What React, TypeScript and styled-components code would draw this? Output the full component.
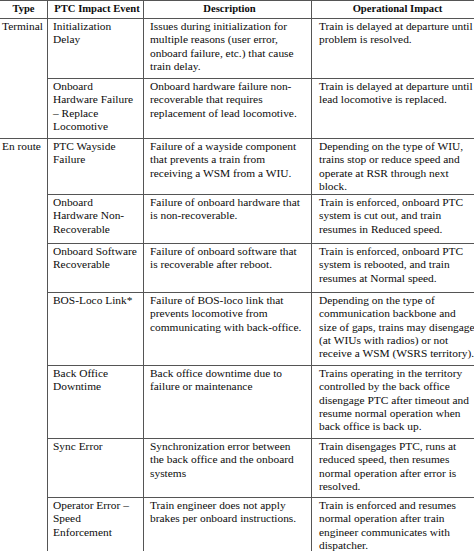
import React from "react";
import styled, { createGlobalStyle } from "styled-components";

const GlobalStyle = createGlobalStyle`
  html, body {
    margin: 0;
    padding: 0;
    background: #ffffff;
    overflow: hidden;
  }
`;

const LINE = "#555555";

// padding-left per column, measured from the reference
const colPad = [2, 5, 6, 7];

const Page = styled.div`
  width: 474px;
  height: 551px;
  overflow: hidden;
  font-family: "Liberation Serif", "Times New Roman", serif;
  font-size: 11.4px;
  line-height: 13.3px;
  color: #0c0c0c;
`;

const Table = styled.table`
  width: 478px;
  table-layout: fixed;
  border-collapse: separate;
  border-spacing: 0;
  border-top: 1px solid ${LINE};
`;

const Row = styled.tr<{ $h: number }>`
  height: ${(p) => p.$h}px;
`;

const HeadCell = styled.th<{ $col: number }>`
  box-sizing: border-box;
  padding: 1px 2px 0 ${(p) => colPad[p.$col]}px;
  font-size: 10.6px;
  font-weight: bold;
  text-align: center;
  vertical-align: top;
  white-space: nowrap;
  border-bottom: 1px solid ${LINE};
  border-right: ${(p) => (p.$col === 3 ? "none" : `1px solid ${LINE}`)};
`;

const Cell = styled.td<{ $col: number }>`
  box-sizing: border-box;
  padding: 1px 0 0 ${(p) => colPad[p.$col]}px;
  text-align: left;
  vertical-align: top;
  white-space: nowrap;
  border-bottom: 1px solid ${LINE};
  border-right: ${(p) => (p.$col === 3 ? "none" : `1px solid ${LINE}`)};
`;

type Entry = {
  event: string[];
  desc: string[];
  impact: string[];
  h: number;
};

const groups: { type: string; rows: Entry[] }[] = [
  {
    type: "Terminal",
    rows: [
      {
        event: ["Initialization", "Delay"],
        desc: [
          "Issues during initialization for",
          "multiple reasons (user error,",
          "onboard failure, etc.) that cause",
          "train delay.",
        ],
        impact: ["Train is delayed at departure until", "problem is resolved."],
        h: 60,
      },
      {
        event: ["Onboard", "Hardware Failure", "– Replace", "Locomotive"],
        desc: [
          "Onboard hardware failure non-",
          "recoverable that requires",
          "replacement of lead locomotive.",
        ],
        impact: [
          "Train is delayed at departure until",
          "lead locomotive is replaced.",
        ],
        h: 60,
      },
    ],
  },
  {
    type: "En route",
    rows: [
      {
        event: ["PTC Wayside", "Failure"],
        desc: [
          "Failure of a wayside component",
          "that prevents a train from",
          "receiving a WSM from a WIU.",
        ],
        impact: [
          "Depending on the type of WIU,",
          "trains stop or reduce speed and",
          "operate at RSR through next",
          "block.",
        ],
        h: 56,
      },
      {
        event: ["Onboard", "Hardware Non-", "Recoverable"],
        desc: ["Failure of onboard hardware that", "is non-recoverable."],
        impact: [
          "Train is enforced, onboard PTC",
          "system is cut out, and train",
          "resumes in Reduced speed.",
        ],
        h: 49,
      },
      {
        event: ["Onboard Software", "Recoverable"],
        desc: ["Failure of onboard software that", "is recoverable after reboot."],
        impact: [
          "Train is enforced, onboard PTC",
          "system is rebooted, and train",
          "resumes at Normal speed.",
        ],
        h: 49,
      },
      {
        event: ["BOS-Loco Link*"],
        desc: [
          "Failure of BOS-loco link that",
          "prevents locomotive from",
          "communicating with back-office.",
        ],
        impact: [
          "Depending on the type of",
          "communication backbone and",
          "size of gaps, trains may disengage",
          "(at WIUs with radios) or not",
          "receive a WSM (WSRS territory).",
        ],
        h: 73,
      },
      {
        event: ["Back Office", "Downtime"],
        desc: ["Back office downtime due to", "failure or maintenance"],
        impact: [
          "Trains operating in the territory",
          "controlled by the back office",
          "disengage PTC after timeout and",
          "resume normal operation when",
          "back office is back up.",
        ],
        h: 73,
      },
      {
        event: ["Sync Error"],
        desc: [
          "Synchronization error between",
          "the back office and the onboard",
          "systems",
        ],
        impact: [
          "Train disengages PTC, runs at",
          "reduced speed, then resumes",
          "normal operation after error is",
          "resolved.",
        ],
        h: 59,
      },
      {
        event: ["Operator Error –", "Speed", "Enforcement"],
        desc: [
          "Train engineer does not apply",
          "brakes per onboard instructions.",
        ],
        impact: [
          "Train is enforced and resumes",
          "normal operation after train",
          "engineer communicates with",
          "dispatcher.",
        ],
        h: 60,
      },
    ],
  },
];

const Lines = ({ lines }: { lines: string[] }) => (
  <>
    {lines.map((l, i) => (
      <React.Fragment key={i}>
        {i > 0 && <br />}
        {l}
      </React.Fragment>
    ))}
  </>
);

export default function App() {
  return (
    <>
      <GlobalStyle />
      <Page>
        <Table>
          <colgroup>
            <col style={{ width: 48 }} />
            <col style={{ width: 96 }} />
            <col style={{ width: 168 }} />
            <col style={{ width: 166 }} />
          </colgroup>
          <thead>
            <Row $h={18}>
              <HeadCell $col={0}>Type</HeadCell>
              <HeadCell $col={1}>PTC Impact Event</HeadCell>
              <HeadCell $col={2}>Description</HeadCell>
              <HeadCell $col={3}>Operational Impact</HeadCell>
            </Row>
          </thead>
          <tbody>
            {groups.map((g) =>
              g.rows.map((r, i) => (
                <Row key={g.type + i} $h={r.h}>
                  {i === 0 && (
                    <Cell $col={0} rowSpan={g.rows.length}>
                      {g.type}
                    </Cell>
                  )}
                  <Cell $col={1}>
                    <Lines lines={r.event} />
                  </Cell>
                  <Cell $col={2}>
                    <Lines lines={r.desc} />
                  </Cell>
                  <Cell $col={3}>
                    <Lines lines={r.impact} />
                  </Cell>
                </Row>
              ))
            )}
          </tbody>
        </Table>
      </Page>
    </>
  );
}
